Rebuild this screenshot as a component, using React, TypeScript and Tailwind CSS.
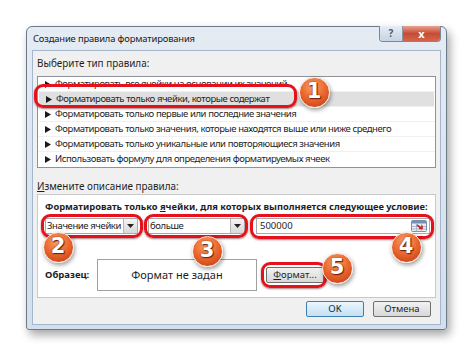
import React from "react";

const rules = [
  "Форматировать все ячейки на основании их значений",
  "Форматировать только ячейки, которые содержат",
  "Форматировать только первые или последние значения",
  "Форматировать только значения, которые находятся выше или ниже среднего",
  "Форматировать только уникальные или повторяющиеся значения",
  "Использовать формулу для определения форматируемых ячеек",
];

// red callout frames drawn over the dialog
const frames = [
  { x: 34, y: 84, w: 263, h: 24 },
  { x: 41, y: 214, w: 102, h: 24 },
  { x: 144, y: 214, w: 104, h: 24 },
  { x: 250, y: 214, w: 184, h: 25 },
  { x: 261, y: 262, w: 66, h: 26 },
];

const badges = [
  { n: 1, x: 314, y: 92 },
  { n: 2, x: 58, y: 247 },
  { n: 3, x: 207, y: 251 },
  { n: 4, x: 406, y: 247 },
  { n: 5, x: 337, y: 268 },
];

function DropArrow() {
  return (
    <div className="w-[14px] h-full border-l border-[#b5b5b5] bg-linear-to-b from-[#f4f4f4] to-[#d9d9d9] flex items-center justify-center">
      <svg width="7" height="4" viewBox="0 0 7 4">
        <path d="M0 0h7L3.5 4z" fill="#222" />
      </svg>
    </div>
  );
}

function Combo({ value, width }: { value: string; width: string }) {
  return (
    <div className={`${width} h-[16px] border border-[#a9a9a9] bg-white flex items-stretch`}>
      <div className="flex-1 pl-[1px] text-[9.5px] tracking-[-0.4px] leading-[14px] text-[#222] whitespace-nowrap overflow-hidden">{value}</div>
      <DropArrow />
    </div>
  );
}

function CollapseIcon() {
  return (
    <svg width="16" height="12" viewBox="0 0 16 12">
      <rect x="0.5" y="0.5" width="15" height="11" rx="1" fill="#e8eef6" stroke="#7d8fa6" />
      <rect x="1" y="1" width="14" height="2.5" fill="#6f8fc0" />
      <path d="M1 6.5h14M1 9h14M5.5 3.5v8M10.5 3.5v8" stroke="#a9b7c9" strokeWidth="1" />
      <path d="M6 5l4.5 3.5M8 8.5h3V5.5" stroke="#d8201c" strokeWidth="1.6" fill="none" />
    </svg>
  );
}

export default function App() {
  return (
    <div className="relative w-[474px] h-[356px] bg-white pt-[26px] pl-[26px] overflow-hidden font-['Segoe_UI','Noto_Sans',sans-serif] text-[#1e1e1e]">
      {/* window */}
      <div className="w-[421px] h-[304px] rounded-t-[6px] rounded-b-[3px] border border-[#6d7a88] bg-linear-to-b from-[#e4ebf3] to-[#d3dfec] px-[5px] pb-[4px] flex flex-col shadow-[3px_5px_10px_rgba(0,0,0,0.35)]">
        <div className="h-[23px] flex justify-between">
          <div className="pl-[1px] pt-[5px] text-[9.4px] tracking-[-0.15px] leading-[14px] text-[#1b1b1b]">Создание правила форматирования</div>
          <div className="flex mt-[-1px] h-[16px] rounded-b-[4px] border border-t-0 border-[#7a8797] overflow-hidden">
            <div className="w-[23px] bg-linear-to-b from-[#e6edf5] to-[#c6d3e2] border-r border-[#8a96a5] flex items-center justify-center text-[10px] font-bold text-[#4a5a70]">?</div>
            <div className="w-[37px] bg-linear-to-b from-[#e8a08f] via-[#c84b33] to-[#d2654c] flex items-center justify-center text-[11px] font-bold text-white leading-none">x</div>
          </div>
        </div>

        {/* client area */}
        <div className="flex-1 bg-[#f0f0f0] border border-[#a4b6cc] flex flex-col">
          <div className="pl-[4px] pt-[6px] text-[9.9px] leading-[13px]">Выберите тип правила:</div>
          <div className="ml-[4px] mr-[4px] mt-[6px] border border-[#8e939b] bg-white flex flex-col">
            {rules.map((r, i) => (
              <div
                key={r}
                className={`h-[15px] flex items-center pl-[7px] text-[9.5px] tracking-[-0.42px] border-b border-[#f0f0f0] last:border-b-0 whitespace-nowrap overflow-hidden ${
                  i === 1 ? "bg-[#e0e0e0] mx-[1px]" : ""
                }`}
              >
                <svg width="6" height="7" viewBox="0 0 6 7" className="mr-[4px] shrink-0">
                  <path d="M0 0l6 3.5L0 7z" fill="#1b1b1b" />
                </svg>
                <span>{r}</span>
              </div>
            ))}
          </div>

          <div className="pl-[4px] mt-[12px] text-[9.9px] leading-[13px]">
            <span className="underline">И</span>змените описание правила:
          </div>
          <div className="ml-[4px] mr-[4px] mt-[1px] h-[104px] border border-[#c9c9c9] bg-white pl-[7px] pr-[5px] pt-[5px] flex flex-col">
            <div className="text-[9.3px] leading-[13px] font-bold whitespace-nowrap">
              Форматировать только <span className="underline">я</span>чейки, для которых выполняется следующее условие:
            </div>
            <div className="mt-[5px] flex items-center">
              <Combo value="Значение ячейки" width="w-[93px]" />
              <div className="ml-[10px]">
                <Combo value="больше" width="w-[97px]" />
              </div>
              <div className="ml-[11px] flex-1 h-[16px] border border-[#a9a9a9] bg-white flex items-center justify-between pl-[3px] pr-[2px]">
                <span className="text-[9.5px] leading-[14px]">500000</span>
                <CollapseIcon />
              </div>
            </div>
            <div className="mt-[25px] flex items-center">
              <div className="w-[52px] text-[9.5px] font-bold">Образец:</div>
              <div className="w-[160px] h-[32px] border border-[#a0a0a0] bg-white flex items-center justify-center text-[11px]">
                Формат не задан
              </div>
              <button className="ml-[9px] w-[58px] h-[16px] rounded-[2px] border border-[#707070] bg-linear-to-b from-[#f2f2f2] to-[#d8d8d8] text-[9.5px] leading-[14px]">
                <span className="underline">Ф</span>ормат...
              </button>
            </div>
          </div>

          <div className="mt-[3px] pr-[9px] flex justify-end gap-[9px]">
            <button className="w-[58px] h-[16px] rounded-[2px] border border-[#3c7fb1] bg-linear-to-b from-[#eaf6fd] to-[#c4e0f3] text-[9.5px] leading-[14px]">
              OK
            </button>
            <button className="w-[58px] h-[16px] rounded-[2px] border border-[#707070] bg-linear-to-b from-[#f2f2f2] to-[#d8d8d8] text-[9.5px] leading-[14px]">
              Отмена
            </button>
          </div>
        </div>
      </div>

      {/* callouts */}
      {frames.map((f, i) => (
        <div
          key={i}
          className="absolute rounded-[9px] border-[3px] border-[#e3121c] shadow-[0_1px_2px_rgba(80,0,0,0.5)]"
          style={{ left: f.x, top: f.y, width: f.w, height: f.h }}
        />
      ))}
      {badges.map((b) => (
        <div
          key={b.n}
          className="absolute w-[31px] h-[31px] rounded-full border-[1.5px] border-[#fbe3d6] bg-[radial-gradient(circle_at_45%_30%,#f9a46d_0%,#ec6a30_45%,#c0360f_100%)] shadow-[1px_2px_4px_rgba(0,0,0,0.4)] flex items-center justify-center text-white text-[21px] font-bold font-['DejaVu_Sans',sans-serif] [text-shadow:0_0_2px_#6b1f08,1px_1px_1px_#6b1f08]"
          style={{ left: b.x - 15.5, top: b.y - 15.5 }}
        >
          {b.n}
        </div>
      ))}
    </div>
  );
}
